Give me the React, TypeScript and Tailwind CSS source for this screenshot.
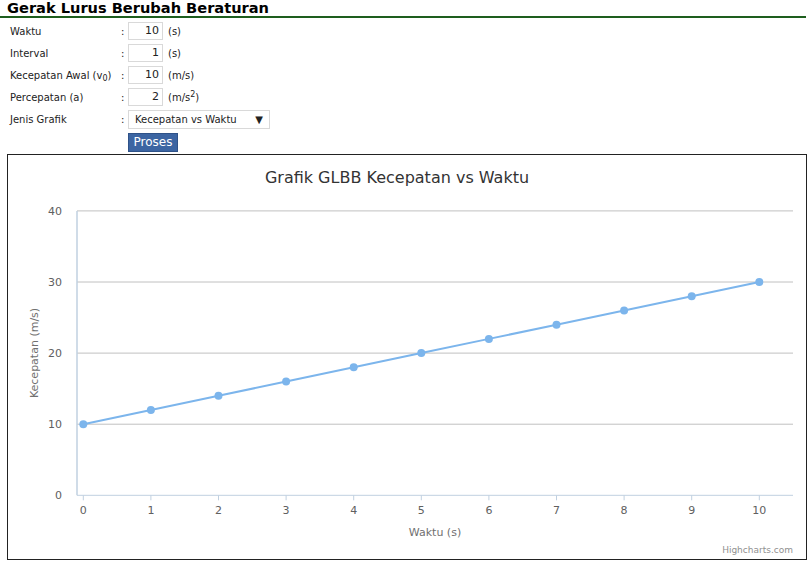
import React from "react";

const xs = [0, 1, 2, 3, 4, 5, 6, 7, 8, 9, 10];
const yTicks = [0, 10, 20, 30, 40];

// chart coords are page coords minus the box origin (8, 155)
const OX = 8;
const OY = 155;
const px = (x: number) => 83.3 + x * 67.6 - OX;
const py = (v: number) => 495.3 - v * 7.11 - OY;

function Field(props: { label: React.ReactNode; value: string; unit: React.ReactNode }) {
  return (
    <>
      <div className="flex items-center h-[22px] whitespace-nowrap">{props.label}</div>
      <div className="flex items-center h-[22px]">:</div>
      <div className="flex items-center h-[22px] gap-[5px]">
        <div className="w-[35px] h-[18px] border border-[#d9d9d9] bg-white text-right pr-[3px] leading-[16px] text-[11px] text-[#222]">
          {props.value}
        </div>
        <span>{props.unit}</span>
      </div>
    </>
  );
}

function Chart() {
  const plotLeft = 77 - OX;
  const plotRight = 793 - OX;
  return (
    <svg width="798" height="404" className="block" style={{ fontFamily: "'DejaVu Sans', Verdana, sans-serif" }}>
      <text x={397 - OX} y={183 - OY} textAnchor="middle" fontSize="16" fill="#333333">
        Grafik GLBB Kecepatan vs Waktu
      </text>

      {yTicks.slice(1).map((v) => (
        <line key={v} x1={plotLeft} x2={plotRight} y1={py(v)} y2={py(v)} stroke="#c0c0c0" strokeWidth="1" />
      ))}
      <line x1={plotLeft} x2={plotRight} y1={py(0)} y2={py(0)} stroke="#c0d0e0" strokeWidth="1" />
      <line x1={plotLeft} x2={plotLeft} y1={py(40)} y2={py(0)} stroke="#c0d0e0" strokeWidth="1.5" />

      {yTicks.map((v) => (
        <text key={v} x={62 - OX} y={py(v) + 4} textAnchor="end" fontSize="11" fill="#606060">
          {v}
        </text>
      ))}

      {xs.map((x) => (
        <g key={x}>
          <line x1={px(x)} x2={px(x)} y1={py(0)} y2={py(0) + 5} stroke="#c0d0e0" strokeWidth="1" />
          <text x={px(x)} y={514 - OY} textAnchor="middle" fontSize="11" fill="#606060">
            {x}
          </text>
        </g>
      ))}

      <polyline
        points={xs.map((x) => `${px(x)},${py(10 + 2 * x)}`).join(" ")}
        fill="none"
        stroke="#7cb5ec"
        strokeWidth="2"
      />
      {xs.map((x) => (
        <circle key={x} cx={px(x)} cy={py(10 + 2 * x)} r="4" fill="#7cb5ec" />
      ))}

      <text
        x={0}
        y={0}
        transform={`translate(${38 - OX},${353 - OY}) rotate(-90)`}
        textAnchor="middle"
        fontSize="11"
        fill="#707070"
      >
        Kecepatan (m/s)
      </text>
      <text x={435 - OX} y={536 - OY} textAnchor="middle" fontSize="11" fill="#707070">
        Waktu (s)
      </text>
      <text x={793 - OX} y={553 - OY} textAnchor="end" fontSize="9" fill="#909090">
        Highcharts.com
      </text>
    </svg>
  );
}

export default function App() {
  return (
    <div className="w-[810px] h-[569px] bg-white text-[#222] overflow-hidden" style={{ fontFamily: "'DejaVu Sans', Verdana, sans-serif" }}>
      <h1 className="w-[806px] text-[14.6px] font-bold leading-[16px] text-black border-b-2 border-[#1e5e1e] pl-[7px]">
        Gerak Lurus Berubah Beraturan
      </h1>

      <div className="grid grid-cols-[111px_7px_auto] pl-[10px] mt-[2px] text-[10px] text-[#222]">
        <Field label="Waktu" value="10" unit="(s)" />
        <Field label="Interval" value="1" unit="(s)" />
        <Field
          label={
            <span>
              Kecepatan Awal (v<sub className="text-[8px]">0</sub>)
            </span>
          }
          value="10"
          unit="(m/s)"
        />
        <Field
          label="Percepatan (a)"
          value="2"
          unit={
            <span>
              (m/s<sup className="text-[8px]">2</sup>)
            </span>
          }
        />

        <div className="flex items-center h-[23px]">Jenis Grafik</div>
        <div className="flex items-center h-[23px]">:</div>
        <div className="flex items-center h-[23px]">
          <div className="w-[142px] h-[19px] border border-[#d9d9d9] flex items-center justify-between pl-[6px] pr-[6px]">
            <span>Kecepatan vs Waktu</span>
            <span className="text-[10px]">▼</span>
          </div>
        </div>

        <div />
        <div />
        <div className="pt-[2px]">
          <button className="w-[50px] h-[19px] bg-[#3c65a2] border border-[#2f5288] text-white text-[12px] leading-[17px] text-center">
            Proses
          </button>
        </div>
      </div>

      <div className="ml-[7px] mt-[2px] w-[800px] border border-[#222] bg-white">
        <Chart />
      </div>
    </div>
  );
}
